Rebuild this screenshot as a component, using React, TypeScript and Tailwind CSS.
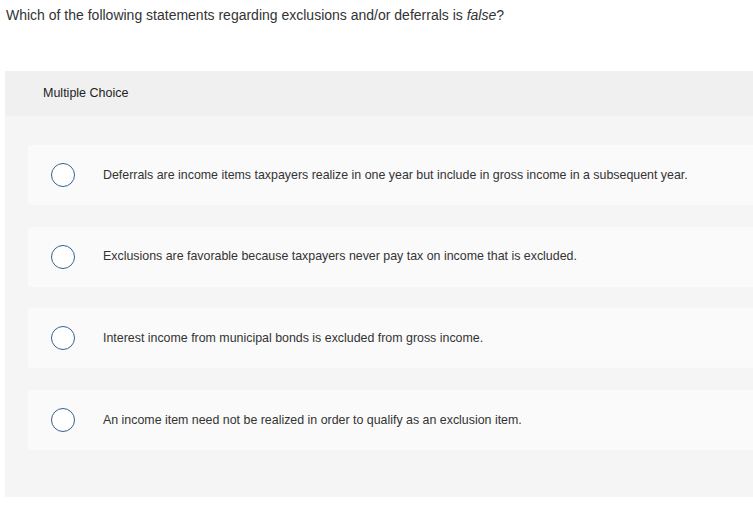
const options = [
  'Deferrals are income items taxpayers realize in one year but include in gross income in a subsequent year.',
  'Exclusions are favorable because taxpayers never pay tax on income that is excluded.',
  'Interest income from municipal bonds is excluded from gross income.',
  'An income item need not be realized in order to qualify as an exclusion item.',
];

export default function App() {
  return (
    <div className="h-[507px] w-[753px] overflow-hidden bg-white font-['Liberation_Sans',Arial,sans-serif] text-[#333]">
      {/* Вопрос */}
      <p className="px-[6px] pt-[7px] text-[14px] leading-[16px] text-[#333]">
        Which of the following statements regarding exclusions and/or deferrals is <i>false</i>?
      </p>

      {/* Панель с вариантами */}
      <div className="mt-[48px] ml-[5px] w-[760px]">
        <div className="flex h-[45px] items-center bg-[#f0f0f0] pl-[38px] text-[12.5px] text-[#222]">
          Multiple Choice
        </div>

        <div className="flex flex-col gap-[21.7px] bg-[#f5f5f5] pt-[29px] pb-[47px] pl-[23px]">
          {options.map((text) => (
            <div
              key={text}
              className="flex h-[60px] items-center rounded-[3px] bg-[#fafafa] pl-[23px]"
            >
              <span className="h-[24px] w-[24px] shrink-0 rounded-full border-[1.5px] border-[#35628e] bg-white" />
              <span className="ml-[28px] text-[12.4px] text-[#333]">{text}</span>
            </div>
          ))}
        </div>
      </div>
    </div>
  );
}
